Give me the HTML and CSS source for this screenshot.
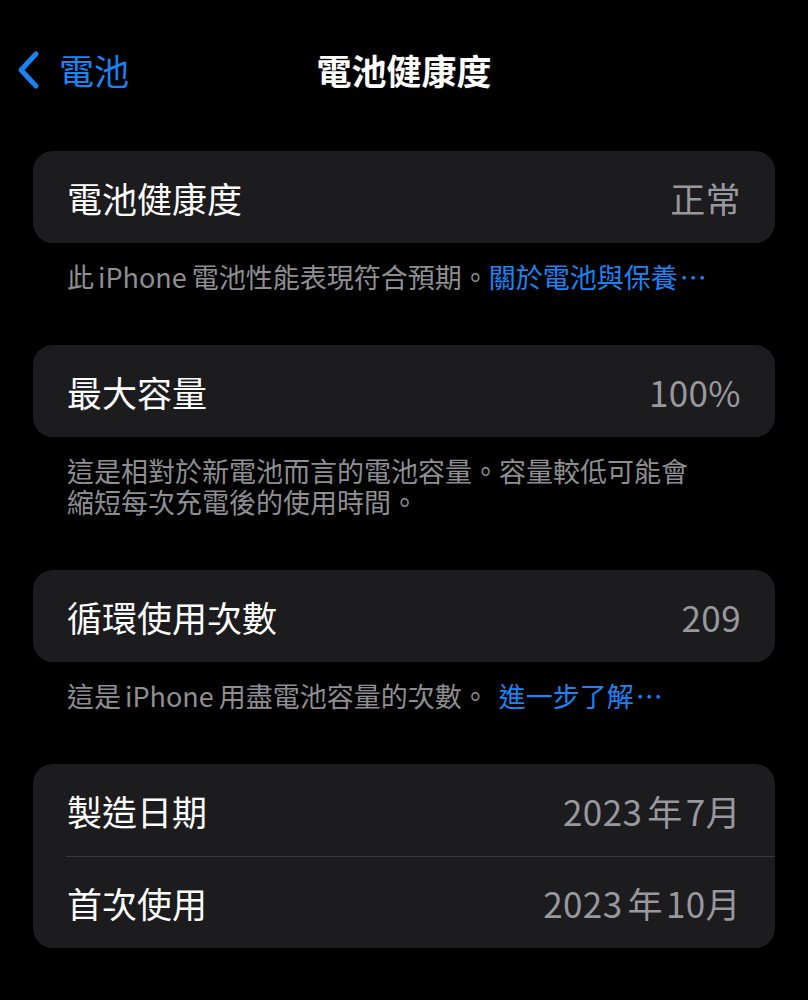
FILE: index.html
```html
<!DOCTYPE html>
<html lang="zh-Hant">
<head>
<meta charset="utf-8">
<title>電池健康度</title>
<link rel="stylesheet" href="styles.css">
</head>
<body>
  <header class="nav">
    <a class="nav-back" href="#">
      <svg class="chevron" width="26" height="40" viewBox="0 0 26 40" aria-hidden="true">
        <polyline points="20,4 5,20 20,36" fill="none" stroke="currentColor" stroke-width="5" stroke-linecap="round" stroke-linejoin="round"/>
      </svg>
      <span>電池</span>
    </a>
    <h1 class="nav-title">電池健康度</h1>
  </header>

  <main class="content">
    <section class="group">
      <div class="card">
        <div class="row"><span class="label">電池健康度</span><span class="value">正常</span></div>
      </div>
      <p class="note">此<span class="latin">iPhone</span>電池性能表現符合預期。<a class="link" href="#">關於電池與保養<span class="ellipsis">⋯</span></a></p>
    </section>

    <section class="group">
      <div class="card">
        <div class="row"><span class="label">最大容量</span><span class="value">100%</span></div>
      </div>
      <p class="note">這是相對於新電池而言的電池容量。容量較低可能會<br>縮短每次充電後的使用時間。</p>
    </section>

    <section class="group">
      <div class="card">
        <div class="row"><span class="label">循環使用次數</span><span class="value">209</span></div>
      </div>
      <p class="note">這是<span class="latin">iPhone</span>用盡電池容量的次數。 <a class="link link-gap" href="#">進一步了解<span class="ellipsis">⋯</span></a></p>
    </section>

    <section class="group">
      <div class="card">
        <div class="row"><span class="label">製造日期</span><span class="value">2023<span class="cjk-gap">年</span>7月</span></div>
        <div class="row"><span class="label">首次使用</span><span class="value">2023<span class="cjk-gap">年</span>10月</span></div>
      </div>
    </section>
  </main>
</body>
</html>
```

FILE: styles.css
```css
* {
  box-sizing: border-box;
}

html, body {
  margin: 0;
  padding: 0;
  background: #000;
}

body {
  width: 808px;
  min-height: 1000px;
  font-family: "Noto Sans CJK TC", "Noto Sans", sans-serif;
  color: #fff;
  overflow: hidden;
}

/* Navigation bar */
.nav {
  position: relative;
  height: 140px;
  display: flex;
  align-items: center;
  justify-content: center;
}

.nav-back {
  position: absolute;
  left: 16px;
  top: 50px;
  display: flex;
  align-items: center;
  gap: 17px;
  color: #1a84f5;
  text-decoration: none;
  font-size: 35px;
  line-height: 40px;
}

.chevron {
  display: block;
}

.nav-title {
  margin: 0;
  font-size: 35px;
  font-weight: 700;
  line-height: 40px;
}

/* Grouped list */
.content {
  padding: 11px 33px 0;
}

.group {
  margin-bottom: 53px;
}

.card {
  background: #1c1c1e;
  border-radius: 20px;
  overflow: hidden;
}

.row {
  height: 92px;
  display: flex;
  align-items: center;
  justify-content: space-between;
  padding: 0 34px;
  position: relative;
}

.row + .row::before {
  content: "";
  position: absolute;
  top: 0;
  left: 33px;
  right: 0;
  height: 1px;
  background: #38383a;
}

.label {
  font-size: 35px;
  color: #fff;
}

.value {
  font-size: 35px;
  color: #98989e;
  letter-spacing: 0.4px;
}

/* spacing between digits and CJK characters in dates */
.cjk-gap {
  margin: 0 3px 0 5px;
}

.note {
  margin: 0;
  padding: 18px 34px 0;
  font-size: 27px;
  line-height: 31px;
  color: #8e8e93;
}

/* spacing around Latin words inside CJK text */
.latin {
  margin: 0 5px 0 4px;
}

.link {
  color: #1a84f5;
  text-decoration: none;
}

.link-gap {
  margin-left: 4px;
}

.ellipsis {
  margin-left: 2px;
}
```
